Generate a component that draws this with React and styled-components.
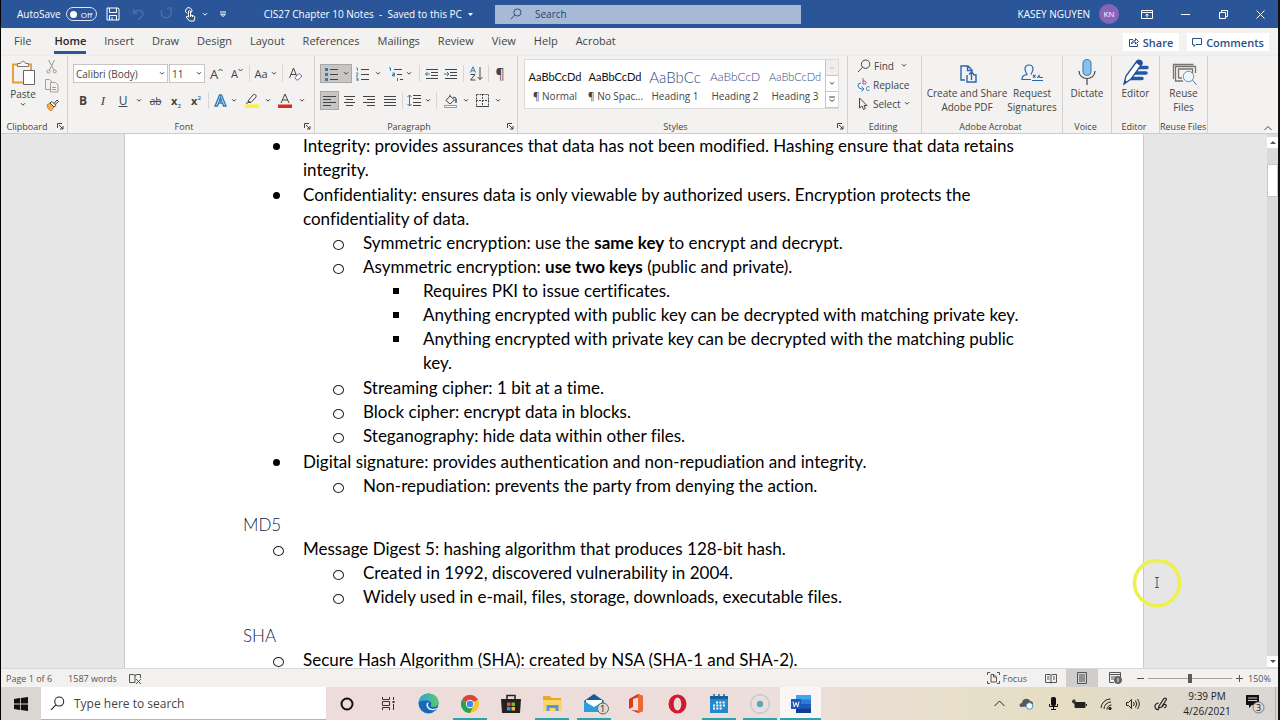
import styled, { createGlobalStyle, css } from "styled-components";

const GlobalStyle = createGlobalStyle`
  * {
    box-sizing: border-box;
  }

  body {
    margin: 0;
    background: #000;
    font-family: "Open Sans", "Noto Sans", sans-serif;
    font-size: 11px;
    color: #444;
  }

  button, input, select {
    font: inherit;
    color: inherit;
    border: 0;
    padding: 0;
    margin: 0;
    background: none;
  }

  svg {
    display: block;
    flex: none;
  }
`;

const Screen = styled.div`
  height: 100vh;
  display: flex;
  flex-direction: column;
  overflow: hidden;
  border-left: 1px solid #000;
  border-right: 2px solid #111;
  background: #f3f2f0;
`;

/* ---------- title bar ---------- */

const TitleBar = styled.header`
  display: grid;
  grid-template-columns: 494fr 306fr 477fr;
  align-items: center;
  height: 28px;
  flex: none;
  background: #2a5699;
  color: #fff;
`;

const TitleLeft = styled.div`
  min-width: 0;
  display: flex;
  align-items: center;
  padding-left: 16px;
  white-space: nowrap;
`;

const AutoSave = styled.label`
  display: flex;
  align-items: center;
  gap: 5px;
  font-size: 10px;
`;

const Toggle = styled.button`
  display: flex;
  align-items: center;
  gap: 4px;
  width: 31px;
  height: 14px;
  padding-left: 3px;
  border: 1px solid #dbe5f3;
  border-radius: 7px;
  font-size: 8px;

  &::before {
    content: "";
    width: 7px;
    height: 7px;
    border-radius: 50%;
    background: #fff;
  }
`;

const QuickButton = styled.button`
  display: flex;
  justify-content: center;
  align-items: center;
  width: ${(p) => p.$w}px;
  height: 24px;
  color: ${(p) => (p.disabled ? "#4a70aa" : "#fff")};
`;

const DocTitle = styled.button`
  display: flex;
  align-items: center;
  gap: 6px;
  margin-left: 33px;
  font-size: 10px;
  white-space: pre;
`;

const TitleSearch = styled.label`
  display: flex;
  align-items: center;
  gap: 13px;
  height: 19px;
  padding-left: 15px;
  background: #a6bad6;
  color: #1f3d6e;

  input {
    flex: 1;
    min-width: 0;
    font-size: 10px;
  }

  input::placeholder {
    color: #27446f;
    opacity: 1;
  }
`;

const TitleRight = styled.div`
  display: flex;
  align-items: center;
  justify-content: flex-end;
  font-size: 10px;
`;

const Avatar = styled.span`
  width: 20px;
  height: 20px;
  margin: 0 9px;
  border-radius: 50%;
  background: #8764b8;
  font-size: 8px;
  line-height: 20px;
  text-align: center;
`;

/* ---------- tabs ---------- */

const TabBar = styled.nav`
  display: flex;
  align-items: center;
  height: 28px;
  flex: none;
  padding: 0 9px 0 13px;
`;

const Tab = styled.a`
  height: 24px;
  margin-right: 18px;
  border-bottom: 3px solid transparent;
  color: #444;
  font-size: 11px;
  line-height: 22px;
  text-decoration: none;

  ${(p) =>
    p.$active &&
    css`
      margin-left: 5px;
      border-color: #2b579a;
      color: #262626;
      font-weight: 600;
    `}
`;

const TabAction = styled.button`
  display: flex;
  align-items: center;
  justify-content: center;
  gap: 4px;
  width: ${(p) => p.$w}px;
  height: 18px;
  margin-left: 8px;
  background: #fff;
  color: #2b4f87;
  font-size: 11px;
  font-weight: 600;
`;

const Spacer = styled.div`
  flex: 1;
`;

/* ---------- ribbon ---------- */

const Ribbon = styled.section`
  display: flex;
  flex: none;
  height: 78px;
  border-bottom: 1px solid #cfcdcb;
  box-shadow: 0 1px 3px rgba(0, 0, 0, 0.18);
  position: relative;
`;

const GroupBox = styled.div`
  display: flex;
  flex-direction: column;
  flex: none;
  width: ${(p) => p.$w}px;
  border-right: 1px solid #d2d0ce;
`;

const GroupBody = styled.div`
  flex: 1;
  display: flex;
  padding-left: ${(p) => p.$pad || 0}px;
`;

const GroupFoot = styled.div`
  display: flex;
  align-items: center;
  height: 14px;
  padding-right: 3px;
  font-size: 9px;

  span {
    flex: 1;
    text-align: center;
    white-space: nowrap;
  }

  button {
    margin-left: 3px;
  }
`;

const Rows = styled.div`
  display: flex;
  flex-direction: column;
  gap: 8px;
  padding-top: 8px;
`;

const Row = styled.div`
  display: flex;
  align-items: center;
  height: 19px;
`;

const Tool = styled.button`
  display: flex;
  align-items: center;
  justify-content: center;
  gap: ${(p) => p.$gap || 0}px;
  width: ${(p) => p.$w}px;
  height: ${(p) => p.$h || 19}px;
  color: #444;
  ${(p) =>
    p.$on &&
    css`
      background: #c8c6c4;
      outline: 1px solid #a9a7a5;
      outline-offset: -1px;
    `}
`;

const Letter = styled.span`
  font-size: ${(p) => p.$size || 12}px;
  font-weight: ${(p) => (p.$bold ? 700 : 400)};
  font-style: ${(p) => (p.$italic ? "italic" : "normal")};
  font-family: ${(p) => (p.$serif ? '"Liberation Serif", serif' : "inherit")};
  text-decoration: ${(p) => p.$line || "none"};
  line-height: 16px;

  sub, sup {
    color: #3a86b7;
    font-size: 6px;
    line-height: 0;
  }
`;

const Divider = styled.i`
  width: 1px;
  height: 17px;
  margin: 0 ${(p) => p.$m}px;
  background: #d8d6d4;
`;

const SelectBox = styled.div`
  display: grid;
  align-items: center;
  width: ${(p) => p.$w}px;
  height: 19px;
  margin-right: 1px;
  border: 1px solid #c8c6c4;
  background: #fff;

  > * {
    grid-area: 1 / 1;
  }

  select {
    width: 100%;
    padding-left: 2px;
    appearance: none;
    font-size: 10px;
  }

  svg {
    justify-self: end;
    margin-right: 2px;
    pointer-events: none;
  }
`;

const PasteButton = styled.button`
  display: flex;
  flex-direction: column;
  align-items: center;
  width: 44px;
  padding-top: 4px;
  font-size: 10px;
  line-height: 14px;
  gap: 1px;
`;

const ClipTools = styled.div`
  display: flex;
  flex-direction: column;
  width: 14px;
  gap: 5px;
  padding-top: 4px;
`;

const Gallery = styled.div`
  display: flex;
  width: 315px;
  height: 50px;
  margin-top: 3px;
  border: 1px solid #dddbd9;
  background: #fff;
`;

const StyleCard = styled.button`
  width: 60px;
  padding: 3px 3px 0;
  overflow: hidden;
  font-size: 10px;
  line-height: 16px;
  white-space: nowrap;

  span {
    display: block;
    height: 21px;
    line-height: 20px;
    font-family: Lato, sans-serif;
    font-size: ${(p) => p.$size}px;
    font-weight: ${(p) => (p.$light ? 300 : 400)};
    color: ${(p) => (p.$light ? "#2f4a80" : "#111")};
  }
`;

const GalleryScroll = styled.div`
  display: flex;
  flex-direction: column;
  width: 13px;
  margin-left: auto;

  button {
    flex: 1;
    display: flex;
    align-items: center;
    justify-content: center;
    border-left: 1px solid #c8c6c4;
    border-bottom: 1px solid #c8c6c4;
  }

  button:disabled {
    color: #c0bebc;
    background: #f0efee;
  }
`;

const EditList = styled.div`
  display: flex;
  flex-direction: column;

  button {
    display: flex;
    align-items: center;
    gap: 3px;
    height: 19px;
    font-size: 10px;
  }
`;

const BigButton = styled.button`
  display: flex;
  flex-direction: column;
  align-items: center;
  width: ${(p) => p.$w}px;
  padding-top: 2px;
  gap: 1px;
  font-size: 10px;
  line-height: 13px;
  white-space: nowrap;
`;

const Collapse = styled.button`
  align-self: flex-end;
  margin: 0 6px 2px auto;
`;

/* ---------- document ---------- */

const Workspace = styled.main`
  position: relative;
  flex: 1;
  min-height: 0;
  display: flex;
  background: #e6e6e6;
`;

const Canvas = styled.div`
  flex: 1;
  min-width: 0;
  overflow: hidden;
`;

const Paper = styled.article`
  max-width: 1020px;
  min-height: 100%;
  margin: 0 auto;
  padding: 0 118px;
  border: solid #c9c9c9;
  border-width: 0 1px;
  background: #fff;
  color: #000;
  font-family: Lato, sans-serif;
  font-size: 17px;
  font-variant-ligatures: none;
  line-height: 24px;
  white-space: nowrap;

  h2 {
    margin: 13px 0 0;
    color: #14264a;
    font-size: 17px;
    font-weight: 300;
    line-height: 25px;
  }
`;

const List = styled.ul`
  margin: 0;
  padding: 0 0 ${(p) => (p.$nested ? 1 : 0)}px 60px;
  list-style: none;
`;

const marks = {
  disc: css`
    width: 7px;
    height: 7px;
    border-radius: 50%;
    background: #000;
  `,
  circle: css`
    width: 9px;
    height: 8px;
    border: 1px solid #222;
    border-radius: 50%;
  `,
  square: css`
    width: 6px;
    height: 6px;
    background: #000;
  `,
};

const Item = styled.li`
  margin-top: ${(p) => (p.$mark === "disc" ? 1 : 0)}px;

  &:first-child {
    margin-top: 0;
  }

  &::before {
    content: "";
    float: left;
    margin: 9px 0 0 -30px;
    ${(p) => marks[p.$mark]}
  }
`;

const ScrollBar = styled.div`
  display: flex;
  flex-direction: column;
  width: 11px;
  padding: 3px 0 1px;
  background: #dadada;

  button {
    display: flex;
    align-items: center;
    justify-content: center;
    height: 11px;
    background: #fff;
  }
`;

const Thumb = styled.div`
  height: 33px;
  margin-top: 16px;
  border: 1px solid #c6c6c6;
  background: #fff;
`;

const Pointer = styled.svg`
  position: absolute;
  right: 96px;
  bottom: 60px;
`;

/* ---------- status bar ---------- */

const StatusBar = styled.footer`
  display: flex;
  align-items: center;
  flex: none;
  height: 19px;
  padding: 0 5px;
  border-top: 1px solid #d9d8d6;
  background: #f2f1ef;
  color: #555;
  font-size: 9px;
`;

const StatusButton = styled.button`
  display: flex;
  align-items: center;
  justify-content: center;
  gap: 3px;
  height: 18px;
  width: ${(p) => (p.$w ? p.$w + "px" : "auto")};
  margin-right: ${(p) => p.$mr || 0}px;
  background: ${(p) => (p.$on ? "#cfcecc" : "none")};
`;

const Zoom = styled.input`
  appearance: none;
  width: 84px;
  height: 10px;
  background: linear-gradient(#a5a4a2, #a5a4a2) center / 100% 1px no-repeat;

  &::-webkit-slider-thumb {
    appearance: none;
    width: 4px;
    height: 9px;
    background: #5c5b5a;
  }
`;

/* ---------- taskbar ---------- */

const TaskBar = styled.footer`
  display: flex;
  flex: none;
  height: 33px;
  background: linear-gradient(90deg, #ecdad9 0%, #ecdedb 60%, #e8dfca 76%, #e5dcc2 84%, #dcd8d0 94%, #d9d7d3 100%);
`;

const StartButton = styled.button`
  display: flex;
  align-items: center;
  justify-content: center;
  width: 40px;
  background: #dad6d1;
`;

const TaskSearch = styled.label`
  display: flex;
  align-items: center;
  gap: 9px;
  width: 285px;
  padding-left: 9px;
  border-bottom: 1px solid #b9b5b3;
  background: #fff;
  color: #222;

  input {
    flex: 1;
    min-width: 0;
    font-size: 12px;
  }

  input::placeholder {
    color: #444;
    opacity: 1;
  }
`;

const TaskButton = styled.button`
  display: flex;
  align-items: center;
  justify-content: center;
  width: ${(p) => p.$w || 41}px;
  background: ${(p) => (p.$active ? "#fbf6f6" : "none")};
  background-image: ${(p) => (p.$open ? "linear-gradient(#2aa3ac, #2aa3ac)" : "none")};
  background-size: ${(p) => (p.$active ? "100%" : "34px")} 2px;
  background-position: bottom center;
  background-repeat: no-repeat;
`;

const TrayButton = styled.button`
  display: flex;
  align-items: center;
  justify-content: center;
  width: ${(p) => p.$w || 27}px;
  color: #222;
`;

const Clock = styled.time`
  width: 64px;
  padding-top: 2px;
  color: #222;
  font-size: 10px;
  line-height: 15px;
  text-align: center;
`;

const ShowDesktop = styled.button`
  width: 3px;
  margin-left: 5px;
  border-left: 1px solid #b5b3b0;
`;

/* ---------- icons ---------- */

const Icon = ({ w = 16, h = w, sw = 1, children, ...rest }) => (
  <svg
    width={w}
    height={h}
    viewBox={`0 0 ${w} ${h}`}
    fill="none"
    stroke="currentColor"
    strokeWidth={sw}
    aria-hidden="true"
    {...rest}
  >
    {children}
  </svg>
);

const Chevron = () => (
  <Icon w={6} h={5}>
    <path d="M1 1.2l2 2 2-2" />
  </Icon>
);

const Launcher = () => (
  <Icon w={8}>
    <path d="M1.5 6V1.5H6M3 3l4 4M7 4v3H4" />
  </Icon>
);

const Lens = ({ size = 14 }) => (
  <Icon w={size} viewBox="0 0 14 14">
    <circle cx="8.6" cy="5.2" r="4.2" />
    <path d="M5.5 8.3L1 13" />
  </Icon>
);

const Lines = ({ rows }) => (
  <Icon w={13} h={12}>
    {rows.map(([x1, x2], i) => (
      <path key={i} d={`M${x1} ${i * 3 + 1.5}H${x2}`} />
    ))}
  </Icon>
);

const BulletIcon = ({ kind }) => (
  <Icon w={15} h={14}>
    {kind === "dots" && (
      <path d="M1 1h3v3H1zM1 6h3v3H1zM1 11h3v3H1z" fill="#2b7cb8" stroke="none" />
    )}
    {kind === "numbers" && (
      <path d="M1 1h1.5v3M1 6h2v1.5L1 9h2M1 11h2v3H1M1.500 12.500H3" stroke="#2b7cb8" strokeWidth=".8" />
    )}
    {kind === "levels" ? (
      <>
        <path d="M6 2.500h8M9 7.500h5M12 12.500h3" />
        <path d="M1 1h1.500v3M4.500 6h2v3h-2V7.500h2M9.500 11v3" stroke="#2b7cb8" />
      </>
    ) : (
      <path d="M6 2.500h8M6 7.500h8M6 12.500h8" />
    )}
  </Icon>
);

const IndentIcon = ({ right }) => (
  <Icon w={13} h={12}>
    <path d="M1 1.500h12M6 4.500h7M6 7.500h7M1 10.500h12" />
    <path d={right ? "M0 6h5M3 4l2 2-2 2" : "M5 6H.5M2.500 4l-2 2 2 2"} stroke="#2b7cb8" />
  </Icon>
);

function Group({ w, pad, label, launcher, children }) {
  return (
    <GroupBox $w={w}>
      <GroupBody $pad={pad}>{children}</GroupBody>
      <GroupFoot>
        <span>{label}</span>
        {launcher && (
          <button aria-label={`${label} settings`}>
            <Launcher />
          </button>
        )}
      </GroupFoot>
    </GroupBox>
  );
}

function Title() {
  return (
    <TitleBar>
      <TitleLeft>
        <AutoSave>
          AutoSave
          <Toggle role="switch" aria-checked="false">
            Off
          </Toggle>
        </AutoSave>
        <QuickButton $w={33} aria-label="Save">
          <Icon w={14}>
            <path d="M1 1h11l1 1v11H1zM3.500 1v4.500h7V1M3.500 13V8.500h7V13M6 10v3" />
          </Icon>
        </QuickButton>
        <QuickButton $w={17} disabled aria-label="Undo">
          <Icon w={13} sw={1.4}>
            <path d="M1.500 1v4h4M2 4.500C5 1 11 2 11 6c0 3-3 4-5 6" />
          </Icon>
        </QuickButton>
        <QuickButton $w={38} disabled aria-label="Redo">
          <Icon w={14} sw={1.4}>
            <path d="M8 1h4v4M3 3a5 5 0 1 0 9 2" />
          </Icon>
        </QuickButton>
        <QuickButton $w={10} aria-label="Touch mode">
          <Icon w={13} h={15}>
            <path d="M4 6.500a3.200 3.200 0 1 1 4.500-1M5.500 10V4q1-1.500 2 0v4l3.500 1q1 .5.800 2L11 14H6.500L3 10q1-1 2.500 0M7.500 8v2M9.500 8.500V10" />
          </Icon>
        </QuickButton>
        <QuickButton $w={20} aria-label="Touch mode options">
          <Chevron />
        </QuickButton>
        <QuickButton $w={16} aria-label="Customize toolbar">
          <Icon w={8} h={7}>
            <path d="M1 1h6M1.500 3.200l2.500 2.300 2.500-2.300z" />
          </Icon>
        </QuickButton>
        <DocTitle>
          {"CIS27 Chapter 10 Notes  -  Saved to this PC"}
          <Icon w={5} h={3}>
            <path d="M0 0h5L2.500 3z" fill="currentColor" stroke="none" />
          </Icon>
        </DocTitle>
      </TitleLeft>
      <TitleSearch>
        <Lens size={12} />
        <input placeholder="Search" aria-label="Search" />
      </TitleSearch>
      <TitleRight>
        KASEY NGUYEN
        <Avatar>KN</Avatar>
        <QuickButton $w={38} aria-label="Ribbon display options">
          <Icon w={12} h={9}>
            <path d="M.5.500h11v8H.5zM.5 2.500h11M6 7.500V4M4.500 5.500L6 4l1.500 1.500" />
          </Icon>
        </QuickButton>
        <QuickButton $w={38} aria-label="Minimize">
          <Icon w={9} h={9}>
            <path d="M0 4.500h9" />
          </Icon>
        </QuickButton>
        <QuickButton $w={38} aria-label="Restore">
          <Icon w={9} h={9}>
            <path d="M.5 2.500h6v6h-6zM2.500 2.500v-2h6v6h-2" />
          </Icon>
        </QuickButton>
        <QuickButton $w={36} aria-label="Close">
          <Icon w={9} h={9}>
            <path d="M.5.500l8 8M8.500.500l-8 8" />
          </Icon>
        </QuickButton>
      </TitleRight>
    </TitleBar>
  );
}

const tabs = [
  "File", "Home", "Insert", "Draw", "Design", "Layout",
  "References", "Mailings", "Review", "View", "Help", "Acrobat",
];

function Tabs() {
  return (
    <TabBar>
      {tabs.map((name) => (
        <Tab key={name} href={`#${name.toLowerCase()}`} $active={name === "Home"}>
          {name}
        </Tab>
      ))}
      <Spacer />
      <TabAction $w={56}>
        <Icon w={10} h={10}>
          <path d="M4 2.500H.5v7h8V7M2.500 7c0-2.500 1.500-3.500 4-3.500V1.500L9.500 4.500 6.500 7V5C4.500 5 3.500 5.500 2.500 7z" />
        </Icon>
        Share
      </TabAction>
      <TabAction $w={82}>
        <Icon w={10} h={9}>
          <path d="M.5.500h9v6H4l-2 2v-2H.5z" />
        </Icon>
        Comments
      </TabAction>
    </TabBar>
  );
}

function ClipboardGroup() {
  return (
    <Group w={67} label="Clipboard" launcher>
      <PasteButton>
        <Icon w={24} h={26}>
          <path d="M7 4.500H2v18h10M17 4.500h3V10" stroke="#e3a23c" strokeWidth="2" />
          <path d="M6.500 6.500v-3h3c.5-3 4.500-3 5 0h3v3z" fill="#f8f8f8" stroke="#777" />
          <path d="M12.500 10.500h11v14h-11z" fill="#fff" stroke="#666" />
        </Icon>
        Paste
        <Chevron />
      </PasteButton>
      <ClipTools>
        <Tool $w={14} $h={14} aria-label="Cut" disabled>
          <Icon w={12} h={14} stroke="#9a9896">
            <path d="M2.500 0l5.500 10M8.500 0L3.500 10" />
            <circle cx="2.500" cy="11.500" r="1.500" />
            <circle cx="8.800" cy="11.500" r="1.500" />
          </Icon>
        </Tool>
        <Tool $w={14} $h={14} aria-label="Copy" disabled>
          <Icon w={14} stroke="#a3a19f">
            <path d="M5 10.500H.5V.500h4l3 3M5.500 3.500h5l2.500 2.500v7H5.500zM7 8.500h4M7 10.500h4" />
          </Icon>
        </Tool>
        <Tool $w={14} $h={14} aria-label="Format Painter">
          <Icon w={13} h={12}>
            <path d="M1 6l3-2 4 4-3 4c-2-1-3.500-3-4-6z" fill="#f0b04a" stroke="#c98520" />
            <path d="M4 4l2-1.500 4 4L8 8zM8 4.500L11 1l1.500 1.500L9 5.500" fill="#fff" />
          </Icon>
        </Tool>
      </ClipTools>
    </Group>
  );
}

function FontGroup() {
  return (
    <Group w={247} pad={5} label="Font" launcher>
      <Rows>
        <Row>
          <SelectBox $w={95}>
            <select aria-label="Font">
              <option>Calibri (Body)</option>
            </select>
            <Chevron />
          </SelectBox>
          <SelectBox $w={36}>
            <select aria-label="Font size">
              <option>11</option>
            </select>
            <Chevron />
          </SelectBox>
          <Tool $w={21} aria-label="Grow font">
            <Letter $size={13}>A</Letter>
            <Icon w={5} h={12}>
              <path d="M.5 3l2-2 2 2" />
            </Icon>
          </Tool>
          <Tool $w={20} aria-label="Shrink font">
            <Letter $size={11}>A</Letter>
            <Icon w={5} h={12}>
              <path d="M.5 1l2 2 2-2" />
            </Icon>
          </Tool>
          <Divider $m={2} />
          <Tool $w={27} $gap={3} aria-label="Change case">
            <Letter $size={11}>Aa</Letter>
            <Chevron />
          </Tool>
          <Divider $m={3} />
          <Tool $w={20} aria-label="Clear formatting">
            <Icon w={14} h={14}>
              <path d="M.5 11L4.500 1l3.500 9M2 7.500h5" />
              <path d="M6 10.500l4-4 3 2.500-4 4H7.500z" fill="#fff" stroke="#a04fb5" />
            </Icon>
          </Tool>
        </Row>
        <Row>
          <Tool $w={20}><Letter $bold>B</Letter></Tool>
          <Tool $w={20}><Letter $italic $serif $size={13}>I</Letter></Tool>
          <Tool $w={20}><Letter $line="underline">U</Letter></Tool>
          <Tool $w={12} aria-label="Underline styles"><Chevron /></Tool>
          <Tool $w={21}><Letter $size={10} $line="line-through">ab</Letter></Tool>
          <Tool $w={20}><Letter $size={11} $bold>x<sub>2</sub></Letter></Tool>
          <Tool $w={20}><Letter $size={11} $bold>x<sup>2</sup></Letter></Tool>
          <Divider $m={2} />
          <Tool $w={18} aria-label="Text effects">
            <Icon w={13} h={13}>
              <path d="M1 12L5.500 1h2L12 12H9.500L8.500 9h-4l-1 3zM5.300 7h2.400L6.500 3.500z" fill="#cfe6f7" stroke="#2b7cb8" strokeWidth="1.300" />
            </Icon>
          </Tool>
          <Tool $w={10} aria-label="Text effect options"><Chevron /></Tool>
          <Tool $w={24} aria-label="Highlight color">
            <Icon w={15} h={15}>
              <path d="M4 8l5-6c1-1.500 4 0 3 2L7 9.500H4.500zM4 8l3 1.500M4.500 9.500L2 10.500" />
              <path d="M1 11.500h14V15H1z" fill="#fbf12d" stroke="none" />
            </Icon>
          </Tool>
          <Tool $w={10} aria-label="Highlight options"><Chevron /></Tool>
          <Tool $w={24} aria-label="Font color">
            <Icon w={14} h={15}>
              <path d="M3 10L7 1l4 9M4.500 7h5" />
              <path d="M0 11.500h14V15H0z" fill="#d92b20" stroke="none" />
            </Icon>
          </Tool>
          <Tool $w={9} aria-label="Font color options"><Chevron /></Tool>
        </Row>
      </Rows>
    </Group>
  );
}

function ParagraphGroup() {
  return (
    <Group w={203} pad={5} label="Paragraph" launcher>
      <Rows>
        <Row>
          <Tool $w={32} $gap={4} $on aria-label="Bullets"><BulletIcon kind="dots" /><Chevron /></Tool>
          <Tool $w={32} $gap={5} aria-label="Numbering"><BulletIcon kind="numbers" /><Chevron /></Tool>
          <Tool $w={32} $gap={3} aria-label="Multilevel list"><BulletIcon kind="levels" /><Chevron /></Tool>
          <Divider $m={3} />
          <Tool $w={17} aria-label="Decrease indent"><IndentIcon /></Tool>
          <Tool $w={21} aria-label="Increase indent"><IndentIcon right /></Tool>
          <Divider $m={2} />
          <Tool $w={20} aria-label="Sort">
            <Icon w={14} h={15}>
              <path d="M1.500 6.500L4 .800l2.500 5.700M2.300 4.800h3.400" stroke="#2b7cb8" />
              <path d="M1.500 8.500h4.500l-4.500 5.500h5M11 1v12.500M8.500 11l2.500 2.500 2.500-2.500" />
            </Icon>
          </Tool>
          <Divider $m={2} />
          <Tool $w={18}><Letter $size={14}>¶</Letter></Tool>
        </Row>
        <Row>
          <Tool $w={19} $on aria-label="Align left"><Lines rows={[[0, 13], [0, 8], [0, 13], [0, 8]]} /></Tool>
          <Tool $w={20} aria-label="Center"><Lines rows={[[1, 12], [3, 10], [1, 12], [3, 10]]} /></Tool>
          <Tool $w={20} aria-label="Align right"><Lines rows={[[0, 12], [4, 12], [0, 12], [4, 12]]} /></Tool>
          <Tool $w={21} aria-label="Justify"><Lines rows={[[1, 13], [1, 13], [1, 13], [1, 13]]} /></Tool>
          <Divider $m={2} />
          <Tool $w={27} $gap={4} aria-label="Line spacing">
            <Icon w={14} h={13}>
              <path d="M2.500 1v11M.5 3l2-2 2 2M.5 10l2 2 2-2" stroke="#2b7cb8" />
              <path d="M6 1.500h8M6 4.500h8M6 8.500h8M6 11.500h8" />
            </Icon>
            <Chevron />
          </Tool>
          <Divider $m={4} />
          <Tool $w={30} $gap={5} aria-label="Shading">
            <Icon w={14} h={14}>
              <path d="M6 2L2 6.500 6 10l4.500-4zM6 2V.500M9 3l3 1v4" />
              <path d="M12 5v4" stroke="#2b7cb8" strokeWidth="1.500" />
              <path d="M.5 11.500h12v2H.5z" fill="#fff" stroke="#999" />
            </Icon>
            <Chevron />
          </Tool>
          <Tool $w={34} $gap={6} aria-label="Borders">
            <Icon w={13} h={13}>
              <path d="M.5.500h12v12M.5.500v12M6.500 0v13M0 6.500h13" strokeDasharray="2 1" />
              <path d="M0 12.500h13" />
            </Icon>
            <Chevron />
          </Tool>
        </Row>
      </Rows>
    </Group>
  );
}

const styleCards = [
  { name: "¶ Normal", size: 11, preview: "AaBbCcDd" },
  { name: "¶ No Spac...", size: 11, preview: "AaBbCcDd" },
  { name: "Heading 1", size: 15, preview: "AaBbCc", light: true },
  { name: "Heading 2", size: 12, preview: "AaBbCcD", light: true },
  { name: "Heading 3", size: 11, preview: "AaBbCcDd", light: true },
];

function StylesGroup() {
  return (
    <Group w={330} pad={6} label="Styles" launcher>
      <Gallery>
        {styleCards.map((card) => (
          <StyleCard key={card.name} $size={card.size} $light={card.light}>
            <span>{card.preview}</span>
            {card.name}
          </StyleCard>
        ))}
        <GalleryScroll>
          <button disabled aria-label="Previous styles">
            <Icon w={6} h={4}><path d="M1 3l2-2 2 2" /></Icon>
          </button>
          <button aria-label="Next styles"><Chevron /></button>
          <button aria-label="More styles">
            <Icon w={8} h={7}><path d="M1 1h6M1.500 3.200L4 5.500l2.500-2.300" /></Icon>
          </button>
        </GalleryScroll>
      </Gallery>
    </Group>
  );
}

function EditingGroup() {
  return (
    <Group w={74} pad={9} label="Editing">
      <EditList>
        <button>
          <Lens />
          Find
          <Tool as="span" $w={14}><Chevron /></Tool>
        </button>
        <button>
          <Icon w={13} h={14}>
            <path d="M6 0v6h2.500q1.500-2-.5-3H6" stroke="#b25087" />
            <path d="M12.500 9q-3-1.500-3 1.500t3 1.500M4 5Q.5 5 1 8t4 3H6M4.500 8.500L7 11l-2.500 2.500" stroke="#2b7cc8" />
          </Icon>
          Replace
        </button>
        <button>
          <Icon w={13} h={13}>
            <path d="M2.500 1v10l2.500-2 1.500 3.500 1.800-1L7 8.500h3z" />
          </Icon>
          Select <Chevron />
        </button>
      </EditList>
    </Group>
  );
}

function RibbonPanel() {
  return (
    <Ribbon>
      <ClipboardGroup />
      <FontGroup />
      <ParagraphGroup />
      <StylesGroup />
      <EditingGroup />
      <Group w={141} pad={3} label="Adobe Acrobat">
        <BigButton $w={84}>
          <Icon w={24} h={28} stroke="#2a66b1" sw={1.4}>
            <path d="M10 22H6V8h7l4 4v3M12.500 8v4.500H17M12 17v7h9v-7h-2.500M16.500 22v-8M14 16.500l2.500-2.500 2.500 2.500" />
          </Icon>
          <span>Create and Share</span>
          <span>Adobe PDF</span>
        </BigButton>
        <BigButton $w={46}>
          <Icon w={24} h={28} stroke="#2a66b1" sw={1.2}>
            <path d="M11 21.500H2c0-3 1-4 5-5-.5-2-2-3-2-5.500 0-2.500 1.500-4 4-4s4 1.500 4 4-1.500 3.500-2 5.500M12 22.500h11M13 17l2.500 2.500M15.500 17L13 19.500M17 19.500h1l1-2 1 2h3" />
          </Icon>
          <span>Request</span>
          <span>Signatures</span>
        </BigButton>
      </Group>
      <Group w={49} label="Voice">
        <BigButton $w={48}>
          <Icon w={20} h={28} sw={1.2}>
            <rect x="6" y="1.500" width="8" height="16" rx="4" fill="#8cc0e8" stroke="#3f8ac0" />
            <path d="M2 13c0 10 16 10 16 0M10 21v6" />
          </Icon>
          Dictate
        </BigButton>
      </Group>
      <Group w={48} label="Editor">
        <BigButton $w={47}>
          <Icon w={26} h={28}>
            <path d="M13 9.500h11M11 15h12M8 20.500h11" stroke="#2458a8" strokeWidth="3.500" strokeLinecap="round" />
            <path d="M1 26l2-8L14 3c2-2 6 0 5 3L8 21z" fill="#fff" stroke="#1f4e9c" strokeWidth="1.300" />
            <path d="M14 3c2-2 6 0 5 3l-1.500 2-5-3.500zM1 26l1-4 2 2z" fill="#1f4e9c" stroke="none" />
          </Icon>
          Editor
        </BigButton>
      </Group>
      <Group w={48} label="Reuse Files">
        <BigButton $w={47}>
          <Icon w={26} h={28}>
            <path d="M12 23H4.500V8.500h20V15M2.500 21V6.500h20M7.500 20v-9h14v4M7.500 20H11" stroke="#77736f" strokeWidth="1.300" />
            <circle cx="17.500" cy="18.500" r="5.200" fill="#eef6fb" stroke="#4f9cc0" />
            <path d="M21.500 22l4 5" stroke="#4f7f9a" />
          </Icon>
          <span>Reuse</span>
          <span>Files</span>
        </BigButton>
      </Group>
      <Collapse aria-label="Collapse ribbon">
        <Icon w={8} h={6}><path d="M.5 5L4 1.500 7.500 5" /></Icon>
      </Collapse>
    </Ribbon>
  );
}

function Notes() {
  return (
    <Paper>
      <List>
        <Item $mark="disc">
          Integrity: provides assurances that data has not been modified. Hashing ensure that data retains
          <br />
          integrity.
        </Item>
        <Item $mark="disc">
          Confidentiality: ensures data is only viewable by authorized users. Encryption protects the
          <br />
          confidentiality of data.
          <List $nested>
            <Item $mark="circle">
              Symmetric encryption: use the <b>same key</b> to encrypt and decrypt.
            </Item>
            <Item $mark="circle">
              Asymmetric encryption: <b>use two keys</b> (public and private).
              <List $nested>
                <Item $mark="square">Requires PKI to issue certificates.</Item>
                <Item $mark="square">
                  Anything encrypted with public key can be decrypted with matching private key.
                </Item>
                <Item $mark="square">
                  Anything encrypted with private key can be decrypted with the matching public
                  <br />
                  key.
                </Item>
              </List>
            </Item>
            <Item $mark="circle">Streaming cipher: 1 bit at a time.</Item>
            <Item $mark="circle">Block cipher: encrypt data in blocks.</Item>
            <Item $mark="circle">Steganography: hide data within other files.</Item>
          </List>
        </Item>
        <Item $mark="disc">
          Digital signature: provides authentication and non-repudiation and integrity.
          <List $nested>
            <Item $mark="circle">Non-repudiation: prevents the party from denying the action.</Item>
          </List>
        </Item>
      </List>
      <h2>MD5</h2>
      <List>
        <Item $mark="circle">
          Message Digest 5: hashing algorithm that produces 128-bit hash.
          <List $nested>
            <Item $mark="circle">Created in 1992, discovered vulnerability in 2004.</Item>
            <Item $mark="circle">Widely used in e-mail, files, storage, downloads, executable files.</Item>
          </List>
        </Item>
      </List>
      <h2>SHA</h2>
      <List>
        <Item $mark="circle">Secure Hash Algorithm (SHA): created by NSA (SHA-1 and SHA-2).</Item>
      </List>
    </Paper>
  );
}

function Status() {
  return (
    <StatusBar>
      <StatusButton $mr={16}>Page 1 of 6</StatusButton>
      <StatusButton $mr={12}>1587 words</StatusButton>
      <StatusButton aria-label="Proofing">
        <Icon w={13} h={11}>
          <path d="M6 1.500v8M6 9.500H.5v-8H4l2 1 2-1h3.500V5M7 6l5 5M12 6l-5 5" />
        </Icon>
      </StatusButton>
      <Spacer />
      <StatusButton $mr={9}>
        <Icon w={13} h={12}>
          <path d="M3 .500H.5V3M10 .500h2.500V3M3 11.500H.5V9M10 11.500h2.500V9M4 2.500h3l2.500 2.500v5H4zM6.500 2.500V5H9" />
        </Icon>
        Focus
      </StatusButton>
      <StatusButton $w={30} aria-label="Read mode">
        <Icon w={12} h={11}>
          <path d="M6 1.500v9M6 9.500H.5v-8H5l1 1 1-1h4.500v8H6M2 4h2.500M2 6h2.500M8 4h2M8 6h2" />
        </Icon>
      </StatusButton>
      <StatusButton $w={32} $on aria-label="Print layout">
        <Icon w={10} h={12}>
          <path d="M.5.500h9v11h-9zM2 3h6M2 5h6M2 7h6M2 9h6" />
        </Icon>
      </StatusButton>
      <StatusButton $w={34} aria-label="Web layout">
        <Icon w={13} h={12}>
          <path d="M5 10.500H.5v-10h11V5M.5 2.500h11M2 5h5M2 7h3" />
          <circle cx="9" cy="8" r="3.500" fill="#666" />
          <path d="M9 6v4" stroke="#eee" />
        </Icon>
      </StatusButton>
      <StatusButton $w={16} aria-label="Zoom out">
        <Icon w={7}><path d="M0 3.500h7" /></Icon>
      </StatusButton>
      <Zoom type="range" min="10" max="290" defaultValue="150" aria-label="Zoom" />
      <StatusButton $w={14} aria-label="Zoom in">
        <Icon w={7}><path d="M0 3.500h7M3.500 0v7" /></Icon>
      </StatusButton>
      <StatusButton $w={27}>150%</StatusButton>
    </StatusBar>
  );
}

function Tasks() {
  return (
    <TaskBar>
      <StartButton aria-label="Start">
        <Icon w={14} stroke="none" fill="#111">
          <path d="M0 2l6-.900V6.600H0zM6.800 1L14 0v6.600H6.800zM0 7.400h6v5.500L0 12zM6.800 7.400H14V14l-7.200-1z" />
        </Icon>
      </StartButton>
      <TaskSearch>
        <Lens size={15} />
        <input placeholder="Type here to search" aria-label="Type here to search" />
      </TaskSearch>
      <TaskButton $w={42} aria-label="Cortana">
        <Icon w={14} stroke="#111" sw={2}><circle cx="7" cy="7" r="5.500" /></Icon>
      </TaskButton>
      <TaskButton $w={39} aria-label="Task view">
        <Icon w={14} h={13} stroke="#333">
          <path d="M1.500 0v2.500h7V0M1.500 4.500h7v4h-7zM1.500 13v-2.500h7V13M12.500 0v3M12.500 7v6" />
          <path d="M11.500 4h2v2h-2z" fill="#333" stroke="none" />
        </Icon>
      </TaskButton>
      <TaskButton $w={42} aria-label="Edge">
        <Icon w={21} stroke="none">
          <defs>
            <linearGradient id="edgeTop" x1="0" y1="0" x2="1" y2="0">
              <stop offset="0" stopColor="#2aa4dc" />
              <stop offset="1" stopColor="#5ccb6a" />
            </linearGradient>
          </defs>
          <circle cx="10.500" cy="10.500" r="10" fill="#1769b8" />
          <path d="M.6 10C1 4 5 .5 10.500.5c6 0 10 4 10 8.500 0 3.500-2.500 5-5 5-2 0-3.500-.8-2.500-2 1-1.500 0-4.500-4-4.500C5 7.500 1.500 8 .600 10z" fill="url(#edgeTop)" />
          <path d="M8.500 11c-.5 4 3 7 8 6l2-1c1-.5 0-1-.5-.7-5 1.700-8-.3-8-3.300 0-1 .5-2 1-2.500-1 0-2.300.500-2.500 1.500z" fill="#eaf4fa" />
        </Icon>
      </TaskButton>
      <TaskButton $open aria-label="Chrome">
        <Icon w={18} stroke="none">
          <circle cx="9" cy="9" r="9" fill="#f6c52e" />
          <path d="M9 9L1.200 4.500A9 9 0 0 1 16.800 4.500z" fill="#dc4437" />
          <path d="M9 9H9L1.200 4.500A9 9 0 0 0 9 18l3.500-7z" fill="#2c9f53" />
          <path d="M9 5h8a9 9 0 0 0-.3-.5L9 4z" fill="#dc4437" />
          <circle cx="9" cy="9" r="4.200" fill="#fff" />
          <circle cx="9" cy="9" r="3.300" fill="#4386e8" />
        </Icon>
      </TaskButton>
      <TaskButton aria-label="Store">
        <Icon w={20} h={20} stroke="none">
          <path d="M6 6V1.500h8V6" stroke="#222" strokeWidth="1.500" />
          <path d="M0 5h20l-1 14H1z" fill="#25211f" />
          <path d="M6 8.500h3.500V12H6z" fill="#e9562f" />
          <path d="M10.500 8.500H14V12h-3.500z" fill="#7fba2c" />
          <path d="M6 13h3.500v3.500H6z" fill="#25a2dd" />
          <path d="M10.500 13H14v3.500h-3.500z" fill="#f9bb2a" />
        </Icon>
      </TaskButton>
      <TaskButton $w={42} $open aria-label="File Explorer">
        <Icon w={19} h={16} stroke="none">
          <path d="M0 0h7l1.500 2H18v13H0z" fill="#e9a928" />
          <path d="M0 4h19v11H0z" fill="#f8d66b" />
          <path d="M3.500 15V9h12v6h-3v-3h-6v3z" fill="#5497d4" />
        </Icon>
      </TaskButton>
      <TaskButton $w={42} $open aria-label="Mail">
        <Icon w={30} h={22} stroke="none">
          <path d="M5 8l10-7 10 7v11H5z" fill="#125c9b" />
          <path d="M7 7h16v7H7z" fill="#fff" />
          <path d="M5 8l10 6 10-6v11H5z" fill="#2a9fdc" />
          <circle cx="24" cy="15.500" r="5.500" fill="#ddd8d8" stroke="#666" />
          <text x="21" y="19" fontSize="9" fill="#111">1</text>
        </Icon>
      </TaskButton>
      <TaskButton $w={42} aria-label="Office">
        <Icon w={16} h={19} stroke="none">
          <path d="M1 5l9-5 5 2v15l-5 2-7-3 7 .5V3.500L5 5v8l-4 2z" fill="#d83b1d" />
          <path d="M10 0l5 2v15l-5 2z" fill="#ec6a36" />
        </Icon>
      </TaskButton>
      <TaskButton aria-label="Opera">
        <Icon w={19} h={20} stroke="none">
          <path fillRule="evenodd" d="M9.500.500a9 9.500 0 1 0 0 19 9 9.500 0 1 0 0-19zm0 3c2.200 0 3.800 3 3.800 6.500s-1.600 6.500-3.800 6.500S5.700 13.500 5.700 10 7.300 3.500 9.500 3.500z" fill="#d5182d" />
        </Icon>
      </TaskButton>
      <TaskButton $open aria-label="Calendar">
        <Icon w={18} h={19} stroke="none">
          <path d="M0 2h18v17H0z" fill="#2488cf" />
          <path d="M0 2h18v3H0z" fill="#156299" />
          <path d="M4 0v3.500M9 0v3.500M14 0v3.500" stroke="#17679f" strokeWidth="1.500" />
          <path d="M6 8.500h10M3 11.500h13M3 14.500h10" stroke="#fff" strokeWidth="2" strokeDasharray="2 1.300" />
        </Icon>
      </TaskButton>
      <TaskButton $open aria-label="Recorder">
        <Icon w={20} stroke="#9ec3cb">
          <circle cx="10" cy="10" r="9.300" />
          <circle cx="10" cy="10" r="3.200" fill="#58a8bd" stroke="none" />
        </Icon>
      </TaskButton>
      <TaskButton $active $open aria-label="Word">
        <Icon w={20} h={18} stroke="none">
          <path d="M5 0h15v18H5z" fill="#2b7cd3" />
          <path d="M5 0h15v4.500H5z" fill="#41a5ee" />
          <path d="M5 9h15v9H5z" fill="#185abd" />
          <path d="M5 13.500h15V18H5z" fill="#103f91" />
          <path d="M0 4h10v10H0z" fill="#185abd" />
          <path d="M2 6.500L3.300 12 5 7.500 6.700 12 8 6.500" stroke="#fff" />
        </Icon>
      </TaskButton>
      <Spacer />
      <TrayButton aria-label="Show hidden icons">
        <Icon w={11} h={7}><path d="M.5 6L5.500 1l5 5" /></Icon>
      </TrayButton>
      <TrayButton aria-label="OneDrive">
        <Icon w={15} h={12} stroke="none">
          <path d="M2 9C-.5 8 .500 5 3 5c0-5 7-5.500 8-2 3 0 4 3 2.500 5z" fill="#55565a" />
          <circle cx="10.500" cy="8" r="3.300" fill="#fff" stroke="#4a93c8" />
        </Icon>
      </TrayButton>
      <TrayButton $w={26} aria-label="Microphone">
        <Icon w={9} h={13} stroke="#111">
          <rect x="2.500" y=".5" width="4" height="8" rx="1" fill="#111" />
          <path d="M.5 7v2.500h8V7M4.500 9.500v3M2 12.500h5" />
        </Icon>
      </TrayButton>
      <TrayButton aria-label="Battery">
        <Icon w={15} h={10} stroke="#222">
          <path d="M3 3.500h10v5H3z" fill="#222" />
          <path d="M14.500 5v2M0 2.500h3M1 1h2v3H1z" />
        </Icon>
      </TrayButton>
      <TrayButton $w={26} aria-label="Network">
        <Icon w={12} h={12}>
          <path d="M1 10A9.500 9.500 0 0 1 10.500 1M4 11A7 7 0 0 1 11 4M7 11.500A4.500 4.500 0 0 1 11.500 7" />
          <circle cx="10" cy="10.500" r="1.200" fill="#222" />
        </Icon>
      </TrayButton>
      <TrayButton aria-label="Volume">
        <Icon w={14} h={12}>
          <path d="M.5 4.500h2l3-3v9l-3-3h-2zM7.500 4q1.500 2 0 4M9.500 2.500q2.500 3.500 0 7M11.500 1q3.500 5 0 10" />
        </Icon>
      </TrayButton>
      <TrayButton $w={29} aria-label="Pen">
        <Icon w={14} h={14} sw={1.2}>
          <path d="M5 9L10 1.500q2-1 2.500 1L7.500 10 4.500 11zM4.500 6Q.5 7 1 10t4 2.500M8 10q3-4 4-2t-2 3" />
        </Icon>
      </TrayButton>
      <Clock>
        9:39 PM
        <br />
        4/26/2021
      </Clock>
      <TrayButton $w={31} aria-label="Notifications">
        <Icon w={20} h={20} stroke="none">
          <path d="M1 1h13v10H7l-3 3v-3H1z" fill="#111" />
          <path d="M3 4h9M3 6.500h9" stroke="#ccc" />
          <circle cx="13.500" cy="13.500" r="5.500" fill="#dcd9d5" stroke="#777" />
          <text x="11" y="17" fontSize="9" fill="#111">3</text>
        </Icon>
      </TrayButton>
      <ShowDesktop aria-label="Show desktop" />
    </TaskBar>
  );
}

export default function App() {
  return (
    <Screen>
      <GlobalStyle />
      <Title />
      <Tabs />
      <RibbonPanel />
      <Workspace>
        <Canvas>
          <Notes />
        </Canvas>
        <ScrollBar>
          <button aria-label="Scroll up">
            <Icon w={6} h={3} stroke="none"><path d="M0 3h6L3 0z" fill="#555" /></Icon>
          </button>
          <Thumb />
          <Spacer />
          <button aria-label="Scroll down">
            <Icon w={6} h={3} stroke="none"><path d="M0 0h6L3 3z" fill="#555" /></Icon>
          </button>
        </ScrollBar>
        <Pointer width="50" height="50" fill="none" aria-hidden="true">
          <circle cx="25" cy="25" r="22.500" stroke="#eef04e" strokeWidth="3.500" />
          <path d="M23 19.500h4M25 19.500v10M23 29.500h4" stroke="#555" />
        </Pointer>
      </Workspace>
      <Status />
      <Tasks />
    </Screen>
  );
}
